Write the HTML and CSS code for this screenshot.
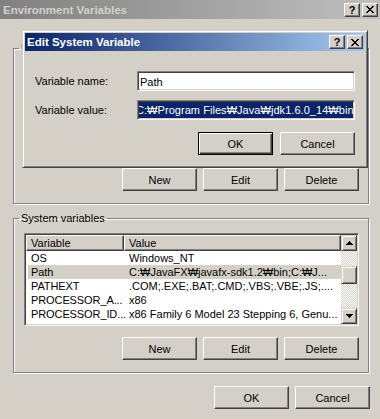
FILE: index.html
```html
<!DOCTYPE html>
<html lang="en">
<head>
    <meta charset="UTF-8">
    <meta name="viewport" content="width=device-width, initial-scale=1.0">
    <title>Environment Variables</title>
    <link rel="stylesheet" href="styles.css">
</head>
<body>
    <div class="window">
        <div class="titlebar inactive">
            <span class="title">Environment Variables</span>
            <div class="title-btns">
                <span class="tbtn">?</span>
                <span class="tbtn">
                    <svg width="8" height="7" viewBox="0 0 8 7" shape-rendering="crispEdges"><path d="M0 0h2v1H0zM6 0h2v1H6zM1 1h2v1H1zM5 1h2v1H5zM2 2h4v1H2zM3 3h2v1H3zM2 4h4v1H2zM1 5h2v1H1zM5 5h2v1H5zM0 6h2v1H0zM6 6h2v1H6z" fill="#000"/></svg>
                </span>
            </div>
        </div>

        <div class="content">
            <fieldset class="group user">
                <legend>User variables for Administrator</legend>
                <div class="listview user-list">
                    <div class="list-main">
                        <div class="list-head"><span class="col col-var">Variable</span><span class="col col-val">Value</span></div>
                    </div>
                </div>
                <div class="btn-row">
                    <button type="button">New</button>
                    <button type="button">Edit</button>
                    <button type="button">Delete</button>
                </div>
            </fieldset>

            <fieldset class="group system">
                <legend>System variables</legend>
                <div class="listview">
                    <div class="list-main">
                        <div class="list-head"><span class="col col-var">Variable</span><span class="col col-val">Value</span></div>
                        <div class="row"><span class="c1">OS</span><span class="c2">Windows_NT</span></div>
                        <div class="row selected"><span class="c1">Path</span><span class="c2">C:₩JavaFX₩javafx-sdk1.2₩bin;C:₩J...</span></div>
                        <div class="row"><span class="c1">PATHEXT</span><span class="c2">.COM;.EXE;.BAT;.CMD;.VBS;.VBE;.JS;....</span></div>
                        <div class="row"><span class="c1">PROCESSOR_A...</span><span class="c2">x86</span></div>
                        <div class="row"><span class="c1">PROCESSOR_ID...</span><span class="c2">x86 Family 6 Model 23 Stepping 6, Genu...</span></div>
                    </div>
                    <div class="scrollbar">
                        <div class="sb-btn">
                            <svg width="7" height="4" viewBox="0 0 7 4" shape-rendering="crispEdges"><path d="M3 0h1v1H3zM2 1h3v1H2zM1 2h5v1H1zM0 3h7v1H0z" fill="#000"/></svg>
                        </div>
                        <div class="sb-track"><div class="sb-thumb"></div></div>
                        <div class="sb-btn">
                            <svg width="7" height="4" viewBox="0 0 7 4" shape-rendering="crispEdges"><path d="M0 0h7v1H0zM1 1h5v1H1zM2 2h3v1H2zM3 3h1v1H3z" fill="#000"/></svg>
                        </div>
                    </div>
                </div>
                <div class="btn-row">
                    <button type="button">New</button>
                    <button type="button">Edit</button>
                    <button type="button">Delete</button>
                </div>
            </fieldset>

            <div class="btn-row footer">
                <button type="button">OK</button>
                <button type="button">Cancel</button>
            </div>
        </div>

        <!-- modal dialog over the parent window -->
        <div class="dialog">
            <div class="titlebar active">
                <span class="title">Edit System Variable</span>
                <div class="title-btns">
                    <span class="tbtn">?</span>
                    <span class="tbtn">
                        <svg width="8" height="7" viewBox="0 0 8 7" shape-rendering="crispEdges"><path d="M0 0h2v1H0zM6 0h2v1H6zM1 1h2v1H1zM5 1h2v1H5zM2 2h4v1H2zM3 3h2v1H3zM2 4h4v1H2zM1 5h2v1H1zM5 5h2v1H5zM0 6h2v1H0zM6 6h2v1H6z" fill="#000"/></svg>
                    </span>
                </div>
            </div>
            <div class="dialog-body">
                <div class="form-row">
                    <span class="form-label">Variable name:</span>
                    <div class="field">Path</div>
                </div>
                <div class="form-row">
                    <span class="form-label">Variable value:</span>
                    <div class="field selected"><span class="sel-text">C:₩Program Files₩Java₩jdk1.6.0_14₩bin</span></div>
                </div>
                <div class="btn-row dialog-btns">
                    <button type="button" class="default">OK</button>
                    <button type="button">Cancel</button>
                </div>
            </div>
        </div>
    </div>
</body>
</html>
```

FILE: styles.css
```css
body {
    margin: 0;
    background-color: #D4D0C8;
    font-family: "Liberation Sans", Arial, "DejaVu Sans", sans-serif;
    font-size: 11px;
    color: #000000;
    overflow: hidden;
}
.window {
    position: relative;
    width: 380px;
    height: 419px;
}
.titlebar {
    display: flex;
    align-items: center;
    height: 19px;
    padding: 0 2px 0 3px;
    font-weight: bold;
    font-size: 11.5px;
    box-sizing: border-box;
}
.titlebar.inactive {
    background: linear-gradient(to right, #808080, #C0C0C0);
    color: #D4D0C8;
}
.titlebar.active {
    height: 18px;
    padding: 0 2px 0 2px;
    background: linear-gradient(to right, #0A246A, #A6CAF0);
    color: #FFFFFF;
}
.title {
    flex: 1;
}
.title-btns {
    display: flex;
    gap: 2px;
}
.tbtn {
    display: flex;
    justify-content: center;
    align-items: center;
    width: 16px;
    height: 14px;
    box-sizing: border-box;
    background-color: #D4D0C8;
    border: 1px solid;
    border-color: #FFFFFF #404040 #404040 #FFFFFF;
    box-shadow: inset -1px -1px #808080;
    color: #000000;
    font-size: 11px;
    font-weight: bold;
    line-height: 12px;
}
.content {
    padding: 0 11px 0 13px;
}
.group {
    margin: 0;
    padding: 8px 9px 12px 10px;
    border: 1px solid #808080;
    box-shadow: 1px 1px 0 #FFFFFF, inset 1px 1px 0 #FFFFFF;
    min-inline-size: 0;
}
.group legend {
    padding: 0 2px;
    margin-left: -5px;
    line-height: 13px;
}
.group.user {
    margin-top: 23px;
}
.group.system {
    margin-top: 8px;
}
.listview {
    display: flex;
    height: 93px;
    box-sizing: border-box;
    padding: 1px;
    background-color: #FFFFFF;
    border: 1px solid;
    border-color: #808080 #FFFFFF #FFFFFF #808080;
    box-shadow: inset 1px 1px #404040, inset -1px -1px #D4D0C8;
}
.listview.user-list {
    height: 94px;
}
.list-main {
    flex: 1;
    min-width: 0;
    overflow: hidden;
}
.list-head {
    display: flex;
    height: 16px;
}
.col {
    box-sizing: border-box;
    height: 16px;
    padding-left: 4px;
    line-height: 14px;
    background-color: #D4D0C8;
    border: 1px solid;
    border-color: #FFFFFF #404040 #404040 #FFFFFF;
    box-shadow: inset -1px -1px #808080;
}
.col-var {
    width: 98px;
}
.col-val {
    flex: 1;
}
.row {
    display: flex;
    height: 14px;
    margin-left: 2px;
    line-height: 14px;
    white-space: nowrap;
}
.row.selected {
    background-color: #D4D0C8;
}
.c1 {
    flex: none;
    width: 96px;
    padding-left: 3px;
    box-sizing: border-box;
    letter-spacing: -0.1px;
}
.c2 {
    padding-left: 5px;
    overflow: hidden;
}
.scrollbar {
    display: flex;
    flex-direction: column;
    width: 16px;
}
.sb-btn, .sb-thumb {
    box-sizing: border-box;
    background-color: #D4D0C8;
    border: 1px solid;
    border-color: #D4D0C8 #404040 #404040 #D4D0C8;
    box-shadow: inset 1px 1px #FFFFFF, inset -1px -1px #808080;
}
.sb-btn {
    display: flex;
    justify-content: center;
    align-items: center;
    height: 16px;
}
.sb-track {
    flex: 1;
    padding-top: 15px;
    background-color: #FFFFFF;
    background-image: conic-gradient(#D4D0C8 25%, #FFFFFF 0 50%, #D4D0C8 0 75%, #FFFFFF 0);
    background-size: 2px 2px;
}
.sb-thumb {
    height: 18px;
}
.btn-row {
    display: flex;
    justify-content: flex-end;
    gap: 6px;
    margin-top: 11px;
}
.btn-row.footer {
    margin-top: 13px;
    margin-right: -1px;
}
button {
    width: 75px;
    height: 23px;
    box-sizing: border-box;
    padding: 0;
    font-family: inherit;
    font-size: 11px;
    color: #000000;
    background-color: #D4D0C8;
    border: 1px solid;
    border-color: #FFFFFF #404040 #404040 #FFFFFF;
    box-shadow: inset -1px -1px #808080;
}
button.default {
    border-color: #000000;
    box-shadow: inset 1px 1px #FFFFFF, inset -1px -1px #404040, inset -2px -2px #808080;
}

/* Edit System Variable dialog */
.dialog {
    position: absolute;
    left: 22px;
    top: 30px;
    width: 346px;
    height: 138px;
    box-sizing: border-box;
    padding: 2px;
    background-color: #D4D0C8;
    border: 1px solid;
    border-color: #D4D0C8 #404040 #404040 #D4D0C8;
    box-shadow: inset 1px 1px #FFFFFF, inset -1px -1px #808080;
}
.dialog-body {
    padding: 20px 10px 0 10px;
}
.form-row {
    display: flex;
    align-items: center;
    margin-bottom: 9px;
}
.form-label {
    width: 102px;
}
.field {
    flex: 1;
    height: 20px;
    box-sizing: border-box;
    padding: 2px 2px 0 2px;
    line-height: 16px;
    background-color: #FFFFFF;
    border: 1px solid;
    border-color: #808080 #FFFFFF #FFFFFF #808080;
    box-shadow: inset 1px 1px #404040, inset -1px -1px #D4D0C8;
    white-space: nowrap;
    overflow: hidden;
}
.field.selected {
    padding: 1px;
    background-color: #0A246A;
    color: #FFFFFF;
}
.sel-text {
    display: block;
    overflow: hidden;
    text-indent: -3px;
    letter-spacing: 0.05px;
}
.dialog-btns {
    margin-top: 12px;
    gap: 7px;
}
```
